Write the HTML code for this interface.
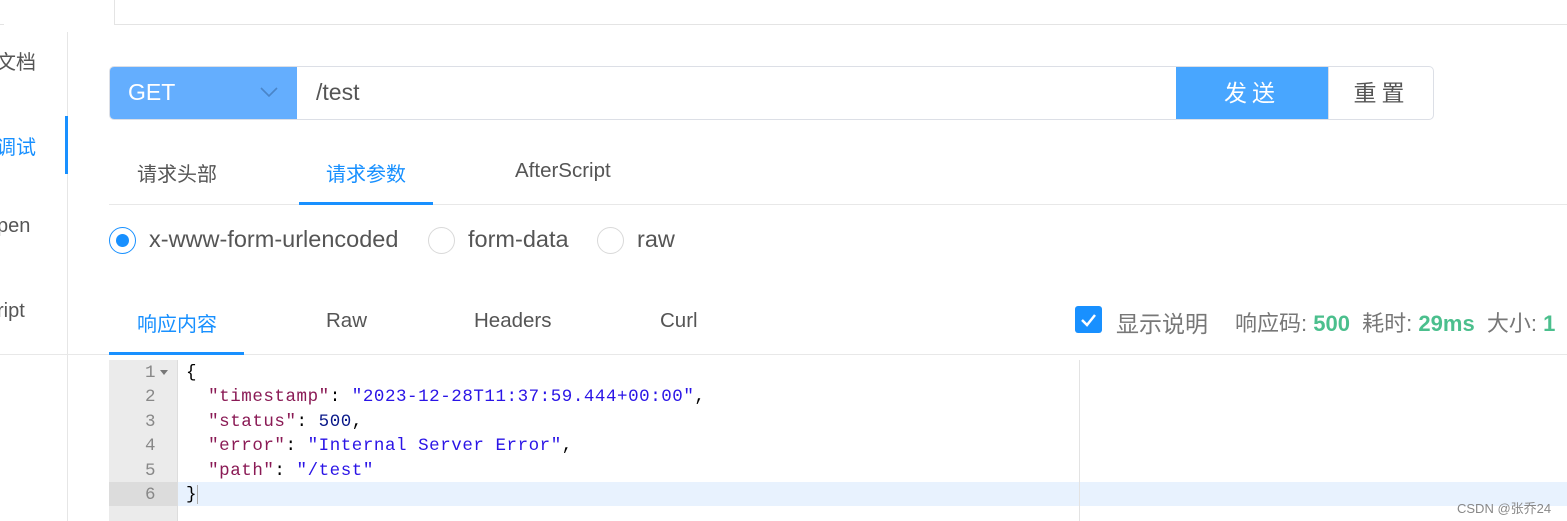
<!DOCTYPE html>
<html><head><meta charset="utf-8"><style>
*{margin:0;padding:0;box-sizing:border-box}
body{width:1567px;height:521px;background:#fff;position:relative;overflow:hidden;font-family:"Liberation Sans","Noto Sans CJK SC",sans-serif;color:#555}
.a{position:absolute;white-space:nowrap}
.code{font-family:"Liberation Mono",monospace;font-size:17.5px;letter-spacing:0.55px}
</style></head><body>
<div class="a" style="left:114px;top:-1px;width:1460px;height:26px;border-left:1px solid #e4e4e4;border-bottom:1px solid #e4e4e4"></div>
<div class="a" style="left:0;top:24px;width:4px;height:1px;background:#e4e4e4"></div>
<div class="a" style="left:67px;top:32px;width:1px;height:489px;background:#e6e6e6"></div>
<div class="a" style="left:65px;top:116px;width:3px;height:58px;background:#1890ff"></div>
<div class="a" style="left:-4px;top:46px;font-size:20px;color:#555">文档</div>
<div class="a" style="left:-4px;top:131px;font-size:20px;color:#1890ff">调试</div>
<div class="a" style="left:-3px;top:215px;font-size:20px;color:#555">pen</div>
<div class="a" style="left:-3px;top:300px;font-size:20px;color:#555">ript</div>

<div class="a" style="left:109px;top:66px;width:1325px;height:54px;border:1px solid #dcdfe6;border-radius:5px;overflow:hidden">
 <div class="a" style="left:0;top:0;width:187px;height:52px;background:#64aefe"></div>
 <div class="a" style="left:18px;top:12px;font-size:23px;color:#fff">GET</div>
 <svg class="a" style="left:150px;top:18px" width="18" height="14" viewBox="0 0 18 14"><path d="M1 3 L9 11 L17 3" fill="none" stroke="#4a85c8" stroke-width="1.6"/></svg>
 <div class="a" style="left:206px;top:12px;font-size:23px;color:#555">/test</div>
 <div class="a" style="left:1066px;top:0;width:152px;height:52px;background:#48a6ff;color:#fff;font-size:23px;text-align:center;line-height:52px;letter-spacing:5px">发送</div>
 <div class="a" style="left:1218px;top:0;width:1px;height:52px;background:#dcdfe6"></div>
 <div class="a" style="left:1219px;top:0;width:105px;height:52px;color:#555;font-size:23px;text-align:center;line-height:52px;letter-spacing:5px">重置</div>
</div>

<div class="a" style="left:109px;top:204px;width:1460px;height:1px;background:#e8e8e8"></div>
<div class="a" style="left:299px;top:202px;width:134px;height:3px;background:#1890ff"></div>
<div class="a" style="left:137px;top:158px;font-size:20px;color:#555">请求头部</div>
<div class="a" style="left:326px;top:158px;font-size:20px;color:#1890ff">请求参数</div>
<div class="a" style="left:515px;top:159px;font-size:20.5px;color:#555">AfterScript</div>

<div class="a" style="left:109px;top:227px;width:27px;height:27px;border:1px solid #1890ff;border-radius:50%"><div class="a" style="left:6px;top:6px;width:13px;height:13px;border-radius:50%;background:#1890ff"></div></div>
<div class="a" style="left:149px;top:226px;font-size:23.5px;color:#555">x-www-form-urlencoded</div>
<div class="a" style="left:428px;top:227px;width:27px;height:27px;border:1px solid #d9d9d9;border-radius:50%"></div>
<div class="a" style="left:468px;top:226px;font-size:23.5px;color:#555">form-data</div>
<div class="a" style="left:597px;top:227px;width:27px;height:27px;border:1px solid #d9d9d9;border-radius:50%"></div>
<div class="a" style="left:637px;top:226px;font-size:23.5px;color:#555">raw</div>

<div class="a" style="left:0;top:354px;width:1567px;height:1px;background:#e8e8e8"></div>
<div class="a" style="left:109px;top:352px;width:135px;height:3px;background:#1890ff"></div>
<div class="a" style="left:137px;top:308px;font-size:20px;color:#1890ff">响应内容</div>
<div class="a" style="left:326px;top:309px;font-size:20.5px;color:#555">Raw</div>
<div class="a" style="left:474px;top:309px;font-size:20.5px;color:#555">Headers</div>
<div class="a" style="left:660px;top:309px;font-size:20.5px;color:#555">Curl</div>

<div class="a" style="left:1075px;top:306px;width:27px;height:27px;background:#1890ff;border-radius:3px"><svg width="27" height="27"><path d="M7 14 L12 19 L20 9" fill="none" stroke="#fff" stroke-width="2.5"/></svg></div>
<div class="a" style="left:1116px;top:305px;font-size:23px;color:#777">显示说明</div>
<div class="a" style="left:1235px;top:306px;font-size:22px;color:#777">响应码: <b style="color:#4bbf8d">500</b>&nbsp;&nbsp;耗时: <b style="color:#4bbf8d">29ms</b>&nbsp;&nbsp;大小: <b style="color:#4bbf8d">1</b></div>

<div class="a" style="left:109px;top:360px;width:68px;height:161px;background:#ebebeb"></div>
<div class="a" style="left:177px;top:360px;width:1px;height:161px;background:#ddd"></div>
<div class="a" style="left:109px;top:482px;width:68px;height:24px;background:#dcdcdc"></div>
<div class="a" style="left:178px;top:482px;width:1389px;height:24px;background:#e8f2fe"></div>
<div class="a" style="left:1079px;top:360px;width:1px;height:161px;background:#e3e3e3"></div>
<div class="a code" style="left:118px;top:361px;width:38px;text-align:right;color:#888;line-height:24.4px">1<br>2<br>3<br>4<br>5<br>6</div>
<div class="a" style="left:160px;top:370px;width:0;height:0;border-left:4px solid transparent;border-right:4px solid transparent;border-top:5px solid #777"></div>
<div class="a code" style="left:186px;top:361px;line-height:24.4px;color:#000"><span>{</span><br>&nbsp;&nbsp;<span style="color:#8a1a55">"timestamp"</span>: <span style="color:#2a14e6">"2023-12-28T11:37:59.444+00:00"</span>,<br>&nbsp;&nbsp;<span style="color:#8a1a55">"status"</span>: <span style="color:#0b1a8a">500</span>,<br>&nbsp;&nbsp;<span style="color:#8a1a55">"error"</span>: <span style="color:#2a14e6">"Internal Server Error"</span>,<br>&nbsp;&nbsp;<span style="color:#8a1a55">"path"</span>: <span style="color:#2a14e6">"/test"</span><br>}</div>
<div class="a" style="left:197px;top:485px;width:1px;height:19px;background:#aaa"></div>
<div class="a" style="left:1457px;top:498px;font-size:13px;color:#888">CSDN @张乔24</div>
</body></html>
